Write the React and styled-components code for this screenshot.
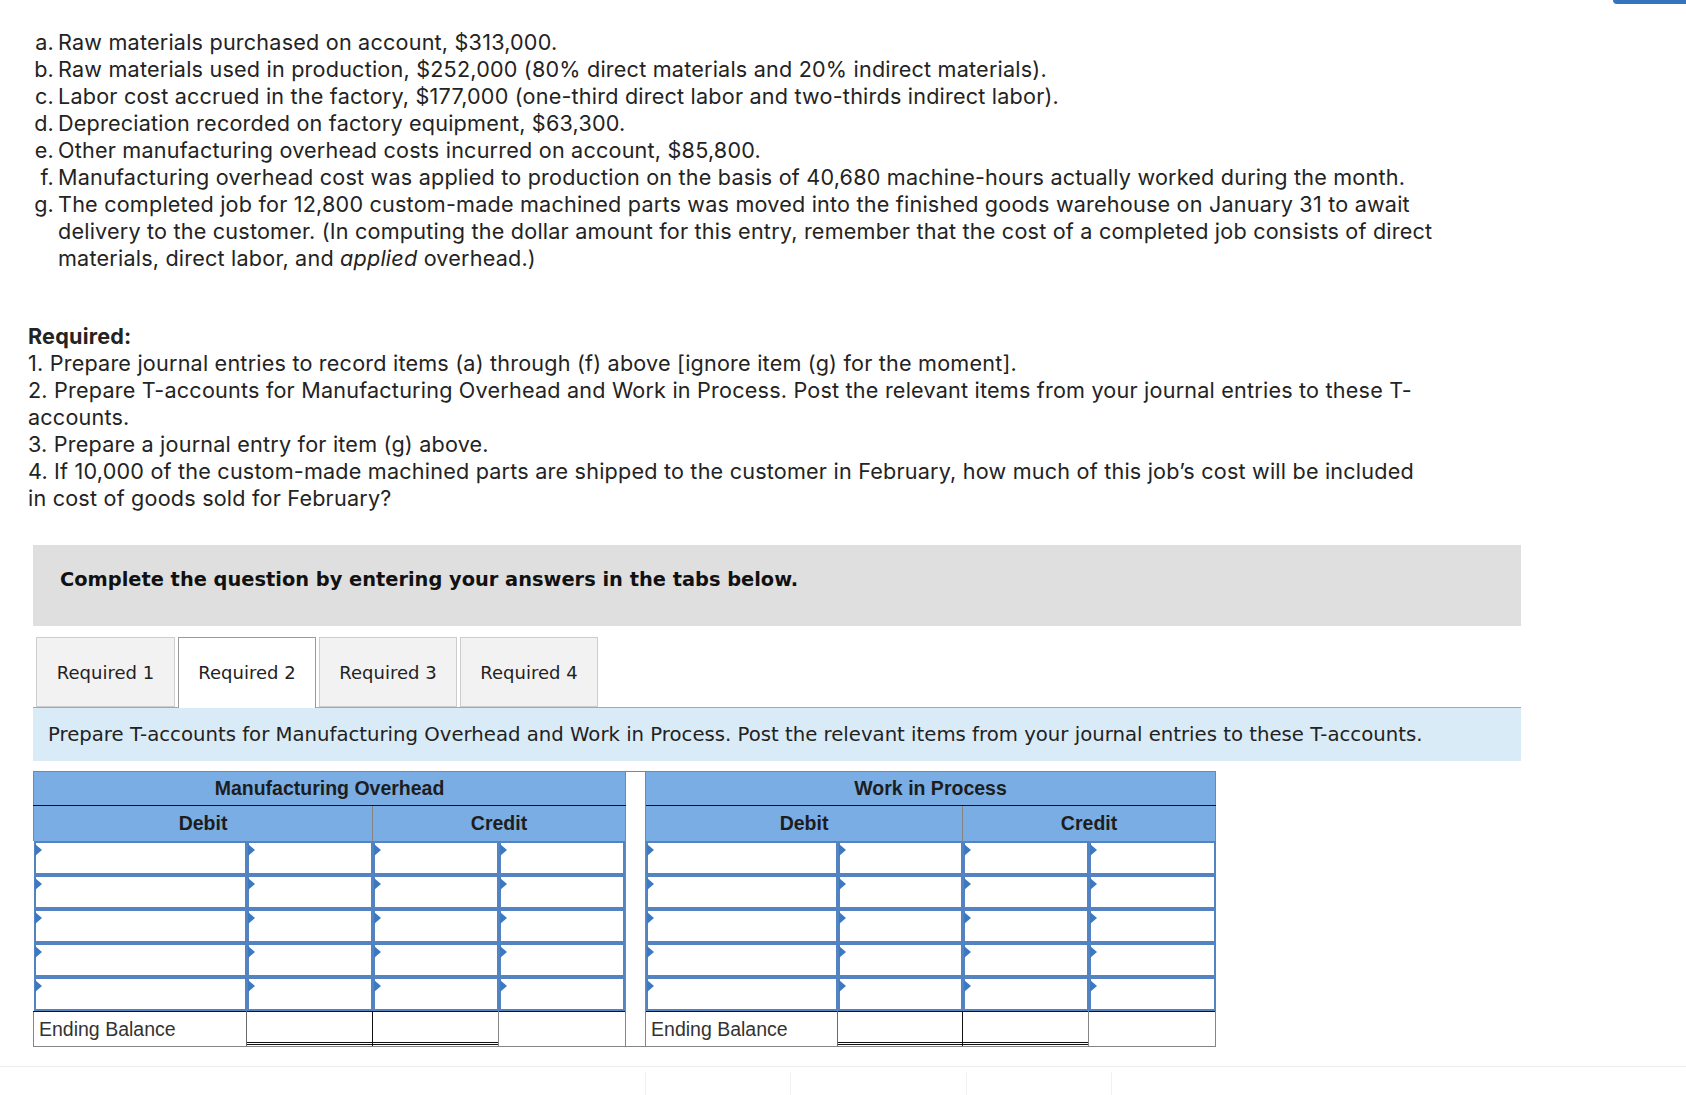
import React from "react";
import styled, { createGlobalStyle } from "styled-components";

const GlobalStyle = createGlobalStyle`
  html, body {
    margin: 0;
    padding: 0;
    background: #fff;
  }
  body {
    font-family: Inter, "Liberation Sans", sans-serif;
    color: #222;
  }
`;

const problems = [
  { mark: "a.", lines: ["Raw materials purchased on account, $313,000."] },
  {
    mark: "b.",
    lines: ["Raw materials used in production, $252,000 (80% direct materials and 20% indirect materials)."],
  },
  {
    mark: "c.",
    lines: ["Labor cost accrued in the factory, $177,000 (one-third direct labor and two-thirds indirect labor)."],
  },
  { mark: "d.", lines: ["Depreciation recorded on factory equipment, $63,300."] },
  { mark: "e.", lines: ["Other manufacturing overhead costs incurred on account, $85,800."] },
  {
    mark: "f.",
    lines: [
      "Manufacturing overhead cost was applied to production on the basis of 40,680 machine-hours actually worked during the month.",
    ],
  },
  {
    mark: "g.",
    lines: [
      "The completed job for 12,800 custom-made machined parts was moved into the finished goods warehouse on January 31 to await",
      "delivery to the customer. (In computing the dollar amount for this entry, remember that the cost of a completed job consists of direct",
      <>
        materials, direct labor, and <em>applied</em> overhead.)
      </>,
    ],
  },
];

const required = [
  ["1. Prepare journal entries to record items (a) through (f) above [ignore item (g) for the moment]."],
  [
    "2. Prepare T-accounts for Manufacturing Overhead and Work in Process. Post the relevant items from your journal entries to these T-",
    "accounts.",
  ],
  ["3. Prepare a journal entry for item (g) above."],
  [
    "4. If 10,000 of the custom-made machined parts are shipped to the customer in February, how much of this job\u2019s cost will be included",
    "in cost of goods sold for February?",
  ],
];

const tabs = ["Required 1", "Required 2", "Required 3", "Required 4"];

const accounts = [
  { name: "Manufacturing Overhead", cols: [213, 126, 126, 127] },
  { name: "Work in Process", cols: [192, 125, 126, 127] },
];

const TopBar = styled.div`
  height: 4px;
  display: flex;
  justify-content: flex-end;
`;

const Pill = styled.div`
  width: 73px;
  height: 4px;
  background: #3573bd;
  border-bottom-left-radius: 4px;
`;

const ProblemList = styled.div`
  padding: 25px 0 0 30px;
  font-size: 21.6px;
  letter-spacing: 0.2px;
  line-height: 27px;
  color: #232323;
`;

const Item = styled.div`
  display: grid;
  grid-template-columns: 24px 1fr;
  column-gap: 4px;
  white-space: nowrap;

  em {
    font-style: italic;
  }
`;

const Mark = styled.span`
  text-align: right;
`;

const Required = styled.div`
  margin: 51px 0 0 28px;
  font-size: 21.6px;
  letter-spacing: 0.2px;
  line-height: 27px;
  color: #232323;
  white-space: nowrap;

  h4 {
    margin: 0;
    font-size: inherit;
    font-weight: 700;
  }
`;

const Workspace = styled.div`
  margin: 33px 0 0 33px;
  width: 1488px;
`;

const Notice = styled.div`
  height: 81px;
  box-sizing: border-box;
  padding: 23px 0 0 27px;
  background: #dfdfdf;
  font-family: "DejaVu Sans", Verdana, sans-serif;
  font-weight: 700;
  font-size: 19.4px;
  color: #111;
`;

const TabRow = styled.div`
  display: flex;
  gap: 3px;
  margin-top: 11px;
  padding-left: 3px;
  align-items: flex-end;
`;

const Tab = styled.div`
  width: ${(p) => p.$w}px;
  height: ${(p) => (p.$active ? 71 : 70)}px;
  margin-bottom: ${(p) => (p.$active ? -1 : 0)}px;
  box-sizing: border-box;
  display: flex;
  align-items: center;
  justify-content: center;
  padding-bottom: ${(p) => (p.$active ? 1 : 0)}px;
  background: ${(p) => (p.$active ? "#fff" : "#f2f2f2")};
  border: 1px solid ${(p) => (p.$active ? "#9a9a9a" : "#cdcdcd")};
  border-bottom: ${(p) => (p.$active ? "none" : "1px solid #cdcdcd")};
  font-family: "DejaVu Sans", Verdana, sans-serif;
  font-size: 18px;
  color: #222;
  position: relative;
  z-index: 1;
`;

const Instruction = styled.div`
  height: 54px;
  box-sizing: border-box;
  border-top: 1px solid #a8a8a8;
  background: #daebf8;
  display: flex;
  align-items: center;
  padding-left: 15px;
  font-family: "DejaVu Sans", Verdana, sans-serif;
  font-size: 19.7px;
  color: #222;
  white-space: nowrap;
`;

const Ledger = styled.table`
  margin-top: 10px;
  border-collapse: collapse;
  table-layout: fixed;
  width: 1182px;
  font-family: "Liberation Sans", Arial, sans-serif;
`;

const Title = styled.td`
  height: 33px;
  padding: 0;
  background: #79ade3;
  border: 1px solid #858585;
  border-bottom: 1px solid #111;
  font-size: 19.5px;
  font-weight: 700;
  color: #1d1d1d;
  text-align: center;
`;

const Side = styled.td`
  height: 35px;
  padding: 0;
  background: #79ade3;
  border-left: 1px solid #858585;
  border-right: 1px solid #858585;
  font-size: 19.5px;
  font-weight: 700;
  color: #1d1d1d;
  text-align: center;
`;

const Gap = styled.td`
  padding: 0;
  background: #fff;
  border: 1px solid #858585;
`;

const InputCell = styled.td`
  padding: 0;
  height: 34px;
`;

const Field = styled.div`
  position: relative;
  height: 34px;
  box-sizing: border-box;
  border: 2px solid #5384c1;
  background: #fff;

  &::before {
    content: "";
    position: absolute;
    left: -1px;
    top: 1px;
    border-left: 7px solid #3b79c4;
    border-top: 6px solid transparent;
    border-bottom: 6px solid transparent;
  }
`;

const BalanceLabel = styled.td`
  height: 34px;
  padding: 0 0 0 5px;
  border-top: 1px solid #111;
  border-left: 1px solid #858585;
  border-bottom: 1px solid #858585;
  border-right: 1px solid #6a6a6a;
  font-size: 19.5px;
  color: #333;
  white-space: nowrap;
`;

const BalanceCell = styled.td`
  padding: 0;
  height: 34px;
  vertical-align: top;
  border-top: 1px solid #111;
  border-bottom: 1px solid #858585;
  border-right: 1px solid ${(p) => p.$edge};
`;

const Total = styled.div`
  height: 33px;
  box-sizing: border-box;
  border-bottom: ${(p) => (p.$ruled ? "3px double #111" : "none")};
`;

const NextTable = styled.div`
  margin-top: 19px;
  border-top: 1px solid #ececec;
  display: grid;
  grid-template-columns: 645px 145px 176px 145px 1fr;
  height: 29px;
`;

const Ghost = styled.div`
  margin-top: 5px;
  border-left: ${(p) => (p.$first ? "none" : "1px solid #f1f1f1")};
`;

const Lines = ({ lines }) =>
  lines.map((line, i) => (
    <React.Fragment key={i}>
      {i > 0 && <br />}
      {line}
    </React.Fragment>
  ));

const Balance = () => (
  <>
    <BalanceLabel>Ending Balance</BalanceLabel>
    <BalanceCell $edge="#111">
      <Total $ruled />
    </BalanceCell>
    <BalanceCell $edge="#858585">
      <Total $ruled />
    </BalanceCell>
    <BalanceCell $edge="#858585">
      <Total />
    </BalanceCell>
  </>
);

export default function App() {
  const rows = [0, 1, 2, 3, 4];
  const cells = [0, 1, 2, 3];
  return (
    <>
      <GlobalStyle />
      <TopBar>
        <Pill />
      </TopBar>

      <ProblemList>
        {problems.map((p) => (
          <Item key={p.mark}>
            <Mark>{p.mark}</Mark>
            <span>
              <Lines lines={p.lines} />
            </span>
          </Item>
        ))}
      </ProblemList>

      <Required>
        <h4>Required:</h4>
        {required.map((lines, i) => (
          <div key={i}>
            <Lines lines={lines} />
          </div>
        ))}
      </Required>

      <Workspace>
        <Notice>Complete the question by entering your answers in the tabs below.</Notice>

        <TabRow>
          {tabs.map((t, i) => (
            <Tab key={t} $active={i === 1} $w={i === 0 ? 139 : 138}>
              {t}
            </Tab>
          ))}
        </TabRow>

        <Instruction>
          Prepare T-accounts for Manufacturing Overhead and Work in Process. Post the relevant items from your journal
          entries to these T-accounts.
        </Instruction>

        <Ledger>
          <colgroup>
            {accounts[0].cols.map((w, i) => (
              <col key={`a${i}`} style={{ width: w }} />
            ))}
            <col style={{ width: 20 }} />
            {accounts[1].cols.map((w, i) => (
              <col key={`b${i}`} style={{ width: w }} />
            ))}
          </colgroup>
          <tbody>
            <tr>
              <Title colSpan={4}>{accounts[0].name}</Title>
              <Gap rowSpan={8} />
              <Title colSpan={4}>{accounts[1].name}</Title>
            </tr>
            <tr>
              <Side colSpan={2}>Debit</Side>
              <Side colSpan={2}>Credit</Side>
              <Side colSpan={2}>Debit</Side>
              <Side colSpan={2}>Credit</Side>
            </tr>
            {rows.map((r) => (
              <tr key={r}>
                {cells.map((c) => (
                  <InputCell key={`l${c}`}>
                    <Field />
                  </InputCell>
                ))}
                {cells.map((c) => (
                  <InputCell key={`r${c}`}>
                    <Field />
                  </InputCell>
                ))}
              </tr>
            ))}
            <tr>
              <Balance />
              <Balance />
            </tr>
          </tbody>
        </Ledger>
      </Workspace>

      <NextTable>
        <Ghost $first />
        <Ghost />
        <Ghost />
        <Ghost />
        <Ghost />
      </NextTable>
    </>
  );
}
